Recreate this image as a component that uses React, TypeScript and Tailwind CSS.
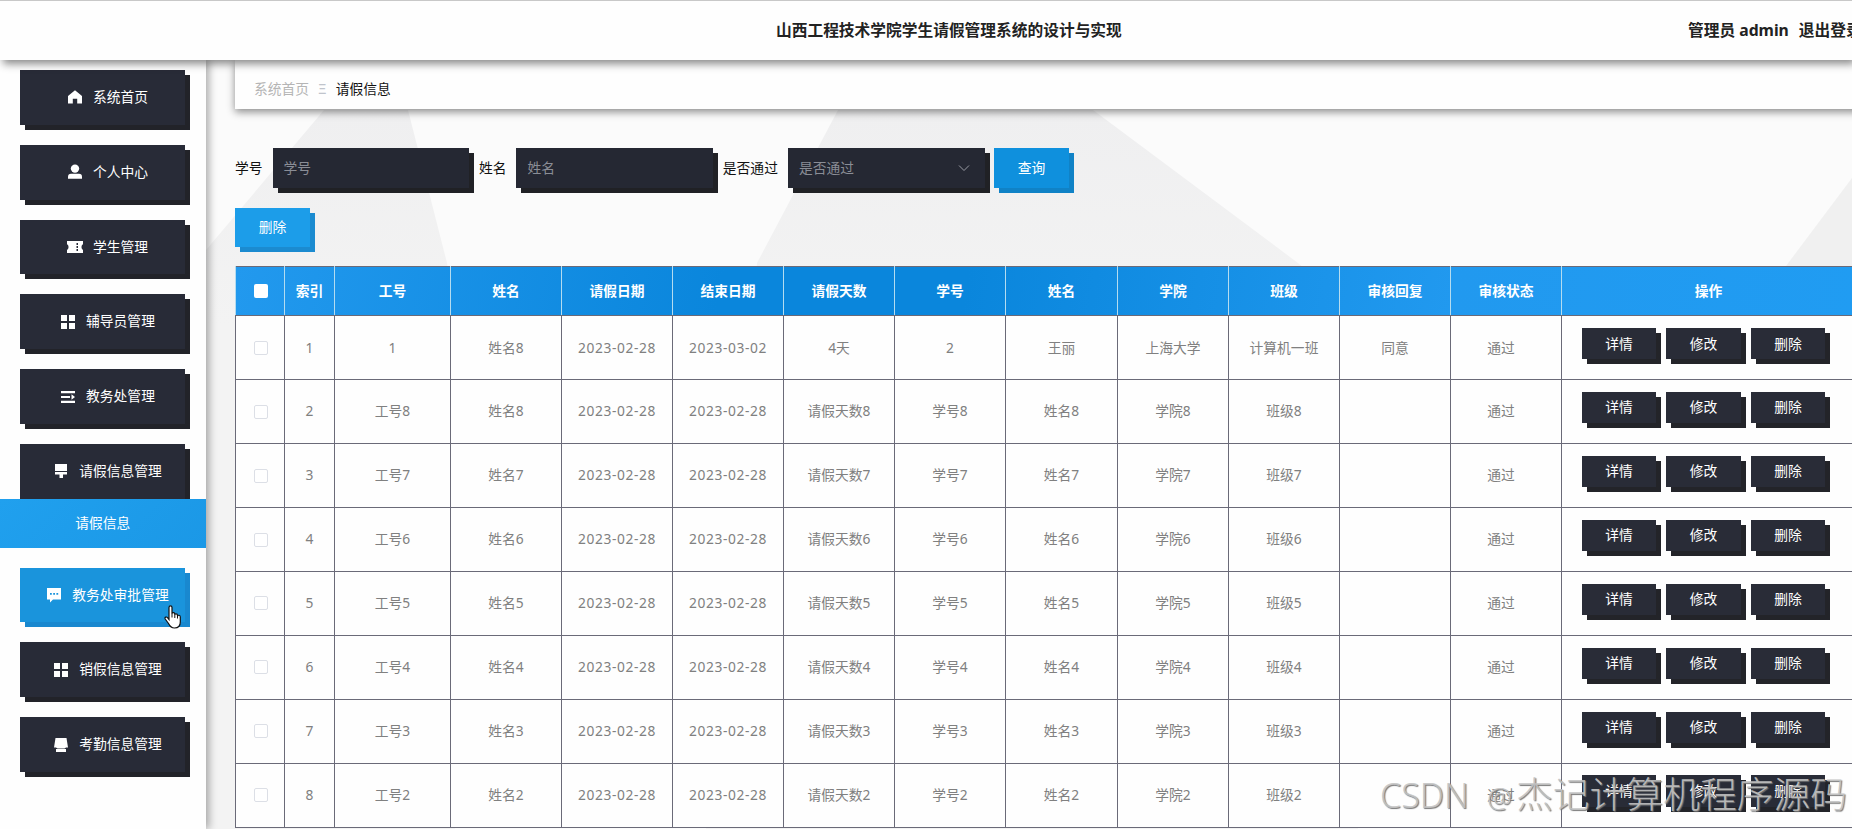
import type { ReactNode } from "react";

const menuIcons: Record<string, ReactNode> = {
  home: <path d="M8 1.2 1 7v7.6h4.800V9.800h4.400v4.800H15V7z" />,
  user: (
    <>
      <circle cx="8" cy="4.6" r="4.2" />
      <path d="M1 14.8v-2q0-3 3-3h8q3 0 3 3v2z" />
    </>
  ),
  ticket: (
    <path
      fillRule="evenodd"
      d="M0 2h16v3.200c-2 .8-2 4.800 0 5.600V14H0v-3.200c2-.8 2-4.800 0-5.600zm9.500 2v2H11V4zm0 3v2H11V7zm0 3v2H11v-2z"
    />
  ),
  grid: <path d="M1 1h6v6H1zM9 1h6v6H9zM1 9h6v6H1zM9 9h6v6H9z" />,
  list: <path d="M1 2h14v2.200H1zM1 6.900h9v2.200H1zM1 11.800h14V14H1zM11.500 5.200 15 8l-3.500 2.800z" />,
  brush: <path d="M2 1h12v7H2zM2 9h12v2.500h-4V15H6.500v-3.500H2z" />,
  chat: (
    <path
      fillRule="evenodd"
      d="M1 1h14v11.500H7L4 15.500v-3H1zM4 6v1.800h1.800V6zm3.200 0v1.800H9V6zm3.200 0v1.800h1.800V6z"
    />
  ),
  printer: <path d="M2.500 1h11L15 10.500h-2l-1.500 1h-7l-1.500-1H1zM3 12h10v3H3z" />,
};

const topMenu = [
  { icon: "home", label: "系统首页" },
  { icon: "user", label: "个人中心" },
  { icon: "ticket", label: "学生管理" },
  { icon: "grid", label: "辅导员管理" },
  { icon: "list", label: "教务处管理" },
  { icon: "brush", label: "请假信息管理" },
];

const bottomMenu = [
  { icon: "chat", label: "教务处审批管理", active: true },
  { icon: "grid", label: "销假信息管理" },
  { icon: "printer", label: "考勤信息管理" },
];

const columns = [
  "索引",
  "工号",
  "姓名",
  "请假日期",
  "结束日期",
  "请假天数",
  "学号",
  "姓名",
  "学院",
  "班级",
  "审核回复",
  "审核状态",
];

const rows = [
  ["1", "1", "姓名8", "2023-02-28", "2023-03-02", "4天", "2", "王丽", "上海大学", "计算机一班", "同意", "通过"],
  ...[8, 7, 6, 5, 4, 3, 2].map((n, i) => [
    `${i + 2}`,
    `工号${n}`,
    `姓名${n}`,
    "2023-02-28",
    "2023-02-28",
    `请假天数${n}`,
    `学号${n}`,
    `姓名${n}`,
    `学院${n}`,
    `班级${n}`,
    "",
    "通过",
  ]),
];

const cellClass = (text: string) => {
  if (text.startsWith("2023")) return "tracking-[0.6px]";
  if (text === "通过") return "pr-[10px]";
  return "";
};

interface MenuItemProps {
  icon: string;
  label: string;
  active?: boolean;
}

const MenuItem = ({ icon, label, active }: MenuItemProps) => (
  <div
    className={`flex h-[54.8px] w-[165px] shrink-0 items-center justify-center pl-[10px] text-white ${
      active
        ? "bg-[#1a94dc] shadow-[5px_5px_0_#1988cf]"
        : "bg-[#282b37] shadow-[5px_5px_0_#222329]"
    }`}
  >
    <svg viewBox="0 0 16 16" className="mr-[10px] size-4 fill-white">
      {menuIcons[icon]}
    </svg>
    <span>{label}</span>
  </div>
);

const Sidebar = () => (
  <aside className="relative z-10 h-[769px] w-[205.5px] shrink-0 bg-[#fefefe] pt-[10px] shadow-[3px_0_8px_rgba(0,0,0,0.32)]">
    <div className="flex flex-col gap-5 pl-5">
      {topMenu.map((item) => (
        <MenuItem key={item.label} {...item} />
      ))}
    </div>
    <div className="relative mb-5 flex h-[48.8px] items-center justify-center bg-[linear-gradient(135deg,#20a0ee,#1b98e6)] text-white">
      请假信息
    </div>
    <div className="flex flex-col gap-5 pl-5">
      {bottomMenu.map((item) => (
        <MenuItem key={item.label} {...item} />
      ))}
    </div>
    <svg viewBox="0 0 18 24" className="absolute top-[545px] left-[164px] h-6 w-[18px]">
      <path
        d="M5 2.500C5 .3 8 .3 8 2.500V9c0-2 2.800-1.800 2.800 0v1c0-1.800 2.700-1.500 2.700.2v1c.3-1.500 2.800-1.200 2.800.8v5c0 3.500-2 6-5.800 6-3.500 0-4.800-2-6-4.500L1.200 14c-.8-1.800 1.300-2.700 2.500-1.200L5 14.500z"
        fill="#fff"
        stroke="#111"
        strokeWidth="1.200"
      />
      <path d="M8 9v3.500M10.800 10v3M13.500 11v2.500" stroke="#111" />
    </svg>
  </aside>
);

const Field = ({ label, children }: { label: string; children?: ReactNode }) => (
  <div className="mr-[9.8px] flex items-center">
    <span className="mr-[10px] text-[#111]">{label}</span>
    <div className="flex h-[39.3px] w-[196.6px] items-center justify-between bg-[#252833] pr-[15px] pl-[11px] text-[#8a8d96] shadow-[5px_5px_0_#202125]">
      {label}
      {children}
    </div>
  </div>
);

const Backdrop = () => (
  <svg viewBox="0 0 1646 769" className="absolute inset-0 h-[769px] w-[1646px]">
    <defs>
      <linearGradient id="facet" x1="0" y1="0" x2="0" y2="1">
        <stop offset="0" stopColor="#efeff0" />
        <stop offset="0.3" stopColor="#f3f3f3" />
      </linearGradient>
    </defs>
    <path d="M118 50h84l39 153 8 60v506H0V190z" fill="url(#facet)" />
    <path d="M632 50h255l205 153 60 50v516H500l51-566z" fill="url(#facet)" />
    <path d="M1646 118v120h-90z" fill="#f0f0f0" />
  </svg>
);

const App = () => {
  return (
    <div className="relative h-[829px] w-[1852px] overflow-hidden bg-[#fbfbfb] font-['Noto_Sans','Noto_Sans_CJK_SC',sans-serif] text-[13.77px]">
      <header className="relative z-20 flex h-[60px] items-center border-t border-[#c8c8c8] bg-[#fefefe] pl-[776px] text-[15.73px] font-bold whitespace-nowrap text-[#222] shadow-[3px_4px_8px_rgba(0,0,0,0.45)]">
        <h1 className="w-[912px] shrink-0">山西工程技术学院学生请假管理系统的设计与实现</h1>
        <span className="mr-[10px]">管理员 admin</span>
        <span>退出登录</span>
      </header>

      <div className="flex">
        <Sidebar />
        <main className="relative h-[769px] w-[1646px] overflow-hidden">
          <Backdrop />
          <div className="relative pl-[29.5px]">
            <nav className="flex h-[49px] w-[1700px] items-center bg-[#fefefe] pt-[10px] pl-[19px] shadow-[0_3px_8px_rgba(0,0,0,0.45)]">
              <span className="text-[#b5b5b5]">系统首页</span>
              <span className="mx-[9px] text-[#c0c4cc]">Ξ</span>
              <span className="text-[#111]">请假信息</span>
            </nav>

            <div className="mt-[39.3px] flex whitespace-nowrap">
              <Field label="学号" />
              <Field label="姓名" />
              <Field label="是否通过">
                <svg viewBox="0 0 12 12" className="size-3 fill-none stroke-[#9a9ca4]">
                  <path d="m1 3.500 5 5 5-5" />
                </svg>
              </Field>
              <button className="h-[39.3px] w-[74.5px] bg-[#0f90dd] text-white shadow-[5px_5px_0_#1082c6]">
                查询
              </button>
            </div>
            <button className="mt-5 block h-[39.3px] w-[75px] bg-[#1c9de9] text-white shadow-[5px_5px_0_#1b8bd0]">
              删除
            </button>

            <table className="mt-[19.5px] w-[1621px] table-fixed border-collapse border border-[#6a6a78] bg-[#fefefe] text-center text-[#808080]">
              <colgroup>
                <col className="w-[49px]" />
                <col className="w-[50px]" />
                <col className="w-[116px]" />
                <col className="w-[111px]" />
                <col className="w-[111px]" />
                <col className="w-[111px]" />
                <col className="w-[111px]" />
                <col className="w-[111px]" />
                <col className="w-[112px]" />
                <col className="w-[111px]" />
                <col className="w-[111px]" />
                <col className="w-[111px]" />
                <col className="w-[111px]" />
                <col />
              </colgroup>
              <thead className="bg-[linear-gradient(100deg,#2299ee_0%,#0a86dc_30%,#0a86dc_45%,#2199ef_75%,#209cf2_100%)] text-white">
                <tr className="h-[49px]">
                  <th className="border-x border-b border-x-[#b4dcf0] border-b-[#6a6a78]">
                    <div className="mx-auto size-[14px] translate-x-px rounded-[2px] bg-white" />
                  </th>
                  {columns.map((title, i) => (
                    <th key={i} className="border-x border-b border-x-[#b4dcf0] border-b-[#6a6a78]">
                      {title}
                    </th>
                  ))}
                  <th className="border-b border-b-[#6a6a78]">操作</th>
                </tr>
              </thead>
              <tbody>
                {rows.map((row) => (
                  <tr key={row[0]} className="h-[63.9px]">
                    <td className="border border-[#6a6a78]">
                      <div className="mx-auto size-[14px] translate-x-px rounded-[2px] border border-[#dcdfe6] bg-white" />
                    </td>
                    {row.map((text, i) => (
                      <td key={i} className={`border border-[#6a6a78] ${cellClass(text)}`}>
                        {text}
                      </td>
                    ))}
                    <td className="border border-[#6a6a78]">
                      <div className="-mt-2 flex justify-center gap-[10px] pr-[10px] text-white">
                        {["详情", "修改", "删除"].map((action) => (
                          <button
                            key={action}
                            className="h-[31.3px] w-[74.6px] bg-[#292c37] shadow-[5px_5px_0_#232429]"
                          >
                            {action}
                          </button>
                        ))}
                      </div>
                    </td>
                  </tr>
                ))}
              </tbody>
            </table>
          </div>
        </main>
      </div>

      <div className="absolute top-[769px] left-[1380px] z-30 flex items-baseline text-[34px] leading-[50px] font-light whitespace-nowrap text-[#c4c4c4]/90 [text-shadow:1px_1px_1px_#777]">
        <span className="w-[107px]">CSDN</span>
        <span className="w-[29px] text-[28px]">@</span>
        <span className="text-[36.8px]">杰记计算机程序源码</span>
      </div>
    </div>
  );
};

export default App;
